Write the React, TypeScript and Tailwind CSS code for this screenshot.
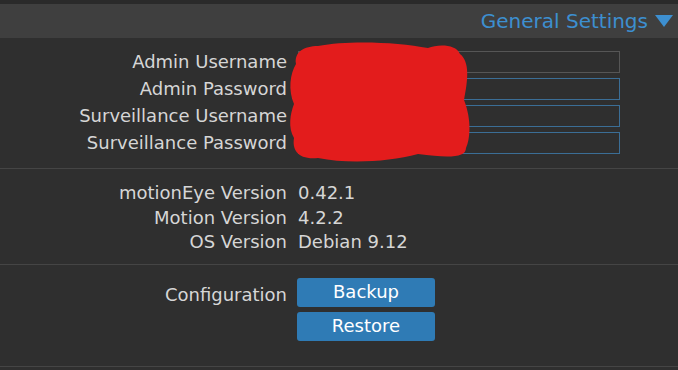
import React from "react";

const credentials = [
  { label: "Admin Username", focus: false },
  { label: "Admin Password", focus: true },
  { label: "Surveillance Username", focus: true },
  { label: "Surveillance Password", focus: true },
];

const versions = [
  { label: "motionEye Version", value: "0.42.1" },
  { label: "Motion Version", value: "4.2.2" },
  { label: "OS Version", value: "Debian 9.12" },
];

const App = () => {
  return (
    <div
      className="w-[678px] h-[370px] overflow-hidden bg-[#2f2f2f] text-[#d6d6d6] text-[18px] relative"
      style={{ fontFamily: '"DejaVu Sans", sans-serif' }}
    >
      <div className="h-[4px] bg-[#2a2a2a]" />
      {/* === Header === */}
      <div className="h-[34px] bg-[#3f3f3f] flex items-center justify-end pr-[4px] text-[#3d8fd0] text-[20px]">
        <span>General Settings</span>
        <svg width="20" height="14" viewBox="0 0 20 14" className="ml-[6px]">
          <polygon points="1,1 19,1 10,13" fill="#3d8fd0" />
        </svg>
      </div>

      {/* === Credentials === */}
      <div className="flex flex-col gap-[5px] pt-[13px] pb-[14px] border-b border-[#454545]">
        {credentials.map((item) => (
          <div key={item.label} className="flex items-center h-[22px]">
            <div className="w-[287px] text-right leading-none">{item.label}</div>
            <div
              className={`ml-[11px] w-[322px] h-[22px] border ${
                item.focus ? "border-[#3b6e96]" : "border-[#565656]"
              }`}
            />
          </div>
        ))}
      </div>

      {/* === Versions === */}
      <div className="flex flex-col pt-[12px] pb-[9px] border-b border-[#454545]">
        {versions.map((item) => (
          <div key={item.label} className="flex items-center h-[24.5px] leading-none">
            <div className="w-[287px] text-right">{item.label}</div>
            <div className="ml-[11px]">{item.value}</div>
          </div>
        ))}
      </div>

      {/* === Configuration === */}
      <div className="flex pt-[13px] pb-[25px] border-b border-[#454545]">
        <div className="w-[287px] text-right pt-[3px]">Configuration</div>
        <div className="ml-[10px] flex flex-col gap-[5px]">
          <button className="w-[138px] h-[29px] rounded-[3px] bg-[#2f7bb5] text-white leading-none">Backup</button>
          <button className="w-[138px] h-[29px] rounded-[3px] bg-[#2f7bb5] text-white leading-none">Restore</button>
        </div>
      </div>

      {/* === Redaction scribble === */}
      <svg
        className="absolute left-[288px] top-[40px]"
        width="186"
        height="124"
        viewBox="0 0 186 124"
      >
        <path
          d="M30,6 C60,0 110,2 140,8 C150,4 168,4 172,14 C182,22 180,40 176,60 C184,80 182,100 178,108 C178,118 160,118 130,114 C100,122 60,124 30,118 C10,120 4,110 6,98 C0,88 2,74 6,64 C0,50 2,34 8,24 C6,12 16,6 30,6 Z"
          fill="#e31c1c"
        />
      </svg>
    </div>
  );
};

export default App;
